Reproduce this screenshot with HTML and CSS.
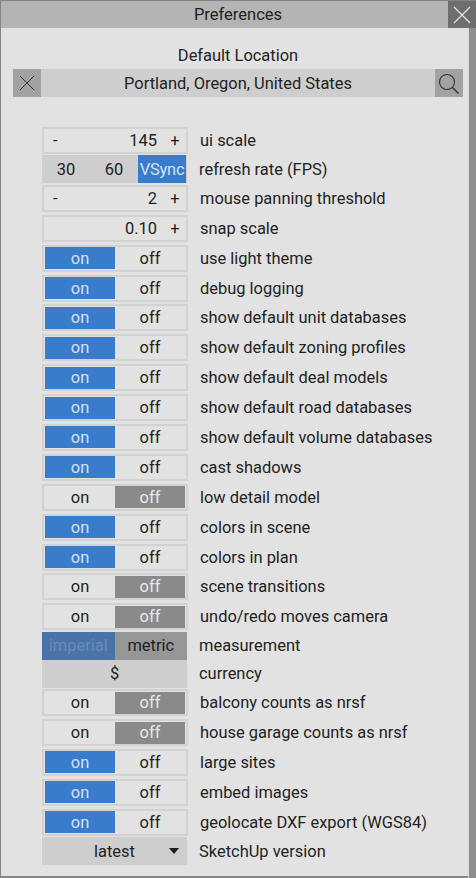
FILE: index.html
```html
<!DOCTYPE html>
<html lang="en">
<head>
<meta charset="utf-8">
<title>Preferences</title>
<link rel="stylesheet" href="styles.css">
</head>
<body>
<div class="window">
  <header class="titlebar">
    <span class="title">Preferences</span>
    <button class="close"><svg viewBox="0 0 28 28" width="28" height="28"><path d="M6 6L22 22M22 6L6 22" stroke="#e4e4e4" stroke-width="1.2" fill="none"/></svg></button>
  </header>
  <div class="location-label">Default Location</div>
  <div class="location">
    <span class="loc-btn"><svg viewBox="0 0 28 28" width="28" height="28"><path d="M7 7L21 21M21 7L7 21" stroke="#333" stroke-width="1" fill="none"/></svg></span>
    <span class="loc-text">Portland, Oregon, United States</span>
    <span class="loc-btn"><svg viewBox="0 0 28 28" width="28" height="28"><circle cx="12" cy="13" r="7.5" stroke="#333" stroke-width="1.1" fill="none"/><path d="M17.5 18.5L23.5 24.5" stroke="#333" stroke-width="1.4" fill="none"/></svg></span>
  </div>
  <div class="rows">
    <div class="row"><div class="box stepper"><span class="minus">-</span><span class="val">145</span><span class="plus">+</span></div><span class="label">ui scale</span></div>
    <div class="row flat"><div class="seg refresh"><span>30</span><span>60</span><span class="sel">VSync</span></div><span class="label">refresh rate (FPS)</span></div>
    <div class="row"><div class="box stepper"><span class="minus">-</span><span class="val">2</span><span class="plus">+</span></div><span class="label">mouse panning threshold</span></div>
    <div class="row"><div class="box stepper"><span class="minus"></span><span class="val">0.10</span><span class="plus">+</span></div><span class="label">snap scale</span></div>
    <div class="row"><div class="box toggle"><span class="on">on</span><span>off</span></div><span class="label">use light theme</span></div>
    <div class="row"><div class="box toggle"><span class="on">on</span><span>off</span></div><span class="label">debug logging</span></div>
    <div class="row"><div class="box toggle"><span class="on">on</span><span>off</span></div><span class="label">show default unit databases</span></div>
    <div class="row"><div class="box toggle"><span class="on">on</span><span>off</span></div><span class="label">show default zoning profiles</span></div>
    <div class="row"><div class="box toggle"><span class="on">on</span><span>off</span></div><span class="label">show default deal models</span></div>
    <div class="row"><div class="box toggle"><span class="on">on</span><span>off</span></div><span class="label">show default road databases</span></div>
    <div class="row"><div class="box toggle"><span class="on">on</span><span>off</span></div><span class="label">show default volume databases</span></div>
    <div class="row"><div class="box toggle"><span class="on">on</span><span>off</span></div><span class="label">cast shadows</span></div>
    <div class="row"><div class="box toggle"><span>on</span><span class="dark">off</span></div><span class="label">low detail model</span></div>
    <div class="row"><div class="box toggle"><span class="on">on</span><span>off</span></div><span class="label">colors in scene</span></div>
    <div class="row"><div class="box toggle"><span class="on">on</span><span>off</span></div><span class="label">colors in plan</span></div>
    <div class="row"><div class="box toggle"><span>on</span><span class="dark">off</span></div><span class="label">scene transitions</span></div>
    <div class="row"><div class="box toggle"><span>on</span><span class="dark">off</span></div><span class="label">undo/redo moves camera</span></div>
    <div class="row flat"><div class="seg measure"><span class="imperial">imperial</span><span class="metric">metric</span></div><span class="label">measurement</span></div>
    <div class="row flat"><div class="seg single"><span>$</span></div><span class="label">currency</span></div>
    <div class="row"><div class="box toggle"><span>on</span><span class="dark">off</span></div><span class="label">balcony counts as nrsf</span></div>
    <div class="row"><div class="box toggle"><span>on</span><span class="dark">off</span></div><span class="label">house garage counts as nrsf</span></div>
    <div class="row"><div class="box toggle"><span class="on">on</span><span>off</span></div><span class="label">large sites</span></div>
    <div class="row"><div class="box toggle"><span class="on">on</span><span>off</span></div><span class="label">embed images</span></div>
    <div class="row"><div class="box toggle"><span class="on">on</span><span>off</span></div><span class="label">geolocate DXF export (WGS84)</span></div>
    <div class="row flat"><div class="seg select"><span class="sel-val">latest</span><svg class="caret" viewBox="0 0 10 6" width="10" height="6"><path d="M0 0H10L5 6Z" fill="#1c1c1c"/></svg></div><span class="label">SketchUp version</span></div>
  </div>
</div>
</body>
</html>
```
FILE: styles.css
```css
* { box-sizing: border-box; }
html, body { margin: 0; padding: 0; }
body {
  width: 476px;
  height: 878px;
  overflow: hidden;
  font-family: Roboto, "Liberation Sans", sans-serif;
  font-size: 16.45px;
  color: #222;
  background: #e2e2e2;
}
.window {
  position: relative;
  height: 878px;
  border: 1px solid #858585;
  border-bottom-width: 2px;
  background: #e2e2e2;
}
.window::after {
  content: "";
  position: absolute;
  top: 27px;
  right: -1px;
  bottom: -2px;
  width: 7px;
  background: #8e8e8e;
  border-left: 1px solid #d8d8d8;
}
.titlebar {
  height: 27px;
  background: #b4b4b4;
  display: flex;
  align-items: center;
  justify-content: center;
  position: relative;
  padding-bottom: 1px;
}
.title { font-size: 16.5px; }
.close {
  position: absolute;
  right: -1px;
  top: 0;
  width: 28px;
  height: 27px;
  padding: 0;
  border: 0;
  background: #6e6e6e;
  display: flex;
  align-items: center;
  justify-content: center;
}
.location-label {
  margin-top: 17px;
  height: 22px;
  line-height: 22px;
  text-align: center;
}
.location {
  margin: 2px 12px 0 12px;
  height: 28px;
  background: #cecece;
  display: flex;
  align-items: center;
}
.loc-btn {
  width: 28px;
  height: 28px;
  flex: none;
  background: #a2a2a2;
  display: flex;
}
.loc-text { flex: 1; text-align: center; }
.rows { margin-top: 28.5px; padding-left: 41px; display: flex; flex-direction: column; }
.row {
  display: flex;
  align-items: center;
  height: 29.9px;
}
.row.flat { height: 28px; }
.label { margin-left: 12px; white-space: nowrap; }
.box {
  width: 146px;
  height: 27px;
  border: 2px solid #d2d2d2;
  background: #e2e2e2;
  display: flex;
  align-items: center;
}
.stepper { padding: 0 6px 0 9px; }
.minus { width: 12px; }
.val { flex: 1; text-align: right; padding-right: 13px; }
.plus { width: 10px; text-align: center; }
.toggle { padding: 0.5px 1px; }
.toggle span {
  flex: 1;
  height: 100%;
  display: flex;
  align-items: center;
  justify-content: center;
}
.toggle .on { background: #3a7ccc; color: #d3e2f5; }
.toggle .dark { background: #8a8a8a; color: #e8e8e8; }
.seg { width: 145px; height: 28px; background: #cecece; display: flex; align-items: center; }
.refresh span { width: 48px; height: 100%; display: flex; align-items: center; justify-content: center; }
.refresh .sel { width: 48px; margin-left: 0; background: #3a7ccc; color: #d3e2f5; letter-spacing: -0.2px; }
.measure span { flex: 1; height: 100%; display: flex; align-items: center; justify-content: center; }
.measure .imperial { background: #4a74a8; color: #6b8bb4; }
.measure .metric { background: #969696; color: #1e1e1e; }
.single { justify-content: center; }
.select { position: relative; justify-content: center; }
.caret { position: absolute; right: 8px; top: 11px; }
```
